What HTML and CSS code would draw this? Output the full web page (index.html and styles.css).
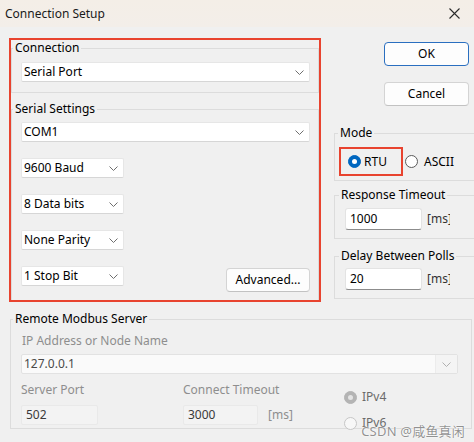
FILE: index.html
```html
<!DOCTYPE html>
<html lang="en">
<head>
<meta charset="utf-8">
<title>Connection Setup</title>
<link rel="stylesheet" href="styles.css">
</head>
<body>
<div class="window">
  <div class="titlebar">
    <span class="title">Connection Setup</span>
    <svg class="close" width="11" height="11" viewBox="0 0 11 11"><path d="M0.5 0.5 L10.5 10.5 M10.5 0.5 L0.5 10.5" stroke="#2b2b2b" stroke-width="1.1" fill="none"/></svg>
  </div>

  <div class="main">
    <div class="hl left">
      <fieldset class="grp g-conn">
        <legend>Connection</legend>
        <div class="combo wide"><span>Serial Port</span><svg class="chev" width="9" height="5" viewBox="0 0 9 5"><polyline points="0.5,0.5 4.5,4.5 8.5,0.5"/></svg></div>
      </fieldset>
      <fieldset class="grp g-serial">
        <legend>Serial Settings</legend>
        <div class="stack">
          <div class="combo wide"><span>COM1</span><svg class="chev" width="9" height="5" viewBox="0 0 9 5"><polyline points="0.5,0.5 4.5,4.5 8.5,0.5"/></svg></div>
          <div class="combo small"><span>9600 Baud</span><svg class="chev" width="9" height="5" viewBox="0 0 9 5"><polyline points="0.5,0.5 4.5,4.5 8.5,0.5"/></svg></div>
          <div class="combo small"><span>8 Data bits</span><svg class="chev" width="9" height="5" viewBox="0 0 9 5"><polyline points="0.5,0.5 4.5,4.5 8.5,0.5"/></svg></div>
          <div class="combo small"><span>None Parity</span><svg class="chev" width="9" height="5" viewBox="0 0 9 5"><polyline points="0.5,0.5 4.5,4.5 8.5,0.5"/></svg></div>
          <div class="last-row">
            <div class="combo small"><span>1 Stop Bit</span><svg class="chev" width="9" height="5" viewBox="0 0 9 5"><polyline points="0.5,0.5 4.5,4.5 8.5,0.5"/></svg></div>
            <div class="btn adv">Advanced...</div>
          </div>
        </div>
      </fieldset>
    </div>

    <div class="right">
      <div class="btn ok">OK</div>
      <div class="btn cancel">Cancel</div>
      <fieldset class="grp g-mode">
        <legend>Mode</legend>
        <div class="mode-row">
          <div class="hl rtu"><span class="radio on"></span><span>RTU</span></div>
          <div class="opt"><span class="radio"></span><span>ASCII</span></div>
        </div>
      </fieldset>
      <fieldset class="grp g-time">
        <legend>Response Timeout</legend>
        <div class="field-row"><div class="tb">1000</div><span class="unit">[ms]</span></div>
      </fieldset>
      <fieldset class="grp g-time g-delay">
        <legend>Delay Between Polls</legend>
        <div class="field-row"><div class="tb">20</div><span class="unit">[ms]</span></div>
      </fieldset>
    </div>
  </div>

  <fieldset class="grp g-remote">
    <legend>Remote Modbus Server</legend>
    <div class="dis-label ip-label">IP Address or Node Name</div>
    <div class="combo dis-combo"><span>127.0.0.1</span><span class="dd"><svg class="chev" width="9" height="5" viewBox="0 0 9 5"><polyline points="0.5,0.5 4.5,4.5 8.5,0.5"/></svg></span></div>
    <div class="net-grid">
      <div class="col">
        <div class="dis-label">Server Port</div>
        <div class="dis-tb port">502</div>
      </div>
      <div class="col">
        <div class="dis-label">Connect Timeout</div>
        <div class="tb-row"><div class="dis-tb ct">3000</div><span class="dis-unit">[ms]</span></div>
      </div>
      <div class="col radios">
        <div class="opt dis"><span class="radio dis-on"></span><span>IPv4</span></div>
        <div class="opt dis"><span class="radio dis-off"></span><span>IPv6</span></div>
      </div>
    </div>
  </fieldset>
</div>
<div class="watermark">CSDN @咸鱼真闲</div>
</body>
</html>
```

FILE: styles.css
```css
* { box-sizing: border-box; }

html, body {
  margin: 0;
  padding: 0;
}

body {
  width: 474px;
  height: 442px;
  overflow: hidden;
  background: #f0f0f0;
  font-family: "Noto Sans", "Noto Sans CJK SC", sans-serif;
  font-size: 12px;
  line-height: 16px;
  color: #000;
  position: relative;
}

.window {
  width: 474px;
  height: 442px;
}

.titlebar {
  height: 27px;
  display: flex;
  align-items: center;
  justify-content: space-between;
  padding: 0 14px 0 5px;
  background: linear-gradient(#f4eee7, #f3eee9);
}

.title {
  font-size: 12px;
  color: #1a1a1a;
}

.main {
  display: flex;
  gap: 13px;
  padding: 11px 0 0 9px;
}

.hl {
  border: 2px solid #e8432f;
}

.left {
  width: 312px;
  height: 264px;
  flex: none;
  display: flex;
  flex-direction: column;
}

/* group boxes */
.grp {
  margin: 0;
  min-width: 0;
  border: 1px solid #dcdcdc;
}

.grp legend {
  padding: 0 2px;
  line-height: 16px;
}

.g-conn {
  padding: 6px 8px 10px 9px;
}
.g-conn legend { margin-left: -8px; }

.g-serial {
  margin-top: 8px;
  padding: 5px 8px 0 9px;
  border-bottom: 0;
  flex: 1;
}
.g-serial legend { margin-left: -8px; }

.stack {
  display: flex;
  flex-direction: column;
  gap: 16px;
}

.last-row {
  display: flex;
  justify-content: space-between;
  align-items: flex-start;
}

/* combo boxes */
.combo {
  height: 20px;
  background: #fff;
  border: 1px solid #e6e6e6;
  border-bottom-color: #d6d6d6;
  border-radius: 2px;
  display: flex;
  align-items: center;
  justify-content: space-between;
  padding: 0 5px 0 2px;
  line-height: 16px;
}

.combo.small { width: 103px; }

.chev {
  flex: none;
}
.chev polyline {
  fill: none;
  stroke: #6e6e6e;
  stroke-width: 1;
}

/* buttons */
.btn {
  background: #fdfdfd;
  border: 1px solid #d4d4d4;
  border-bottom-color: #c2c2c2;
  border-radius: 4px;
  display: flex;
  align-items: center;
  justify-content: center;
  font-size: 12px;
}

.adv {
  width: 84px;
  height: 24px;
  margin-top: 2px;
}

.right {
  width: 150px;
  flex: none;
  display: flex;
  flex-direction: column;
  align-items: stretch;
}

.ok, .cancel {
  width: 85px;
  height: 24px;
  margin-left: 50px;
}

.ok {
  margin-top: 4px;
  border-color: #2a6fc0;
}

.cancel {
  margin-top: 16px;
}

.g-mode {
  margin-top: 19px;
  padding: 6px 0 4px 4px;
}
.g-mode legend { margin-left: -1px; }

.mode-row {
  display: flex;
  align-items: center;
}

.rtu {
  width: 64px;
  height: 29px;
  display: flex;
  align-items: center;
  gap: 3px;
  padding-left: 7px;
}

.opt {
  display: flex;
  align-items: center;
  gap: 6px;
  margin-left: 2px;
}

.radio {
  width: 13px;
  height: 13px;
  border-radius: 50%;
  flex: none;
  position: relative;
  background: #fff;
  border: 1px solid #5b5b5b;
}

.radio.on {
  background: #0067c0;
  border-color: #0067c0;
}
.radio.on::after {
  content: "";
  position: absolute;
  left: 3px;
  top: 3px;
  width: 5px;
  height: 5px;
  border-radius: 50%;
  background: #fff;
}

.g-time {
  margin-top: 6px;
  padding: 5px 0 8px 10px;
}
.g-time legend { margin-left: -6px; }

.g-delay {
  margin-top: 9px;
  padding-top: 4px;
}

.field-row {
  display: flex;
  align-items: center;
}

.tb {
  width: 77px;
  height: 22px;
  background: #fff;
  border: 1px solid #e3e3e3;
  border-bottom-color: #8c8c8c;
  border-radius: 3px;
  padding-left: 4px;
  display: flex;
  align-items: center;
}

.unit {
  width: 23px;
  overflow: hidden;
  white-space: nowrap;
  margin-left: 5px;
  color: #333;
}

/* remote server group */
.g-remote {
  margin: 9px 2px 0 10px;
  padding: 0 13px 3px 10px;
}
.g-remote legend { margin-left: -8px; }

.dis-label {
  color: #8e8e8e;
  line-height: 16px;
}

.ip-label {
  margin-top: 6px;
  padding-left: 1px;
}

.dis-combo {
  margin-top: 5px;
  background: #fafafa;
  border-color: #e2e2e2;
  padding-right: 0;
  color: #4a4a4a;
}

.dd {
  width: 22px;
  height: 18px;
  display: flex;
  align-items: center;
  justify-content: center;
  background: #f4f4f4;
  border-left: 1px solid #ececec;
}
.dd .chev polyline { stroke: #b0b0b0; }

.net-grid {
  margin-top: 8px;
  display: grid;
  grid-template-columns: 162px 161px auto;
  align-items: start;
}

.dis-tb {
  margin-top: 7px;
  height: 20px;
  background: #f3f3f3;
  border: 1px solid #e9e9e9;
  border-radius: 2px;
  padding-left: 4px;
  display: flex;
  align-items: center;
  color: #3a3a3a;
}

.port { width: 77px; }

.tb-row {
  display: flex;
  align-items: flex-end;
}

.ct { width: 75px; }

.dis-unit {
  color: #8e8e8e;
  margin-left: 10px;
  line-height: 16px;
  padding-bottom: 2px;
}

.radios {
  display: flex;
  flex-direction: column;
  gap: 10px;
  margin-top: 7px;
  margin-bottom: -12px;
}

.opt.dis {
  margin-left: 0;
  color: #6a6a6a;
  gap: 5px;
}

.radio.dis-on {
  background: #b4b4b4;
  border-color: #b4b4b4;
}
.radio.dis-on::after {
  content: "";
  position: absolute;
  left: 3px;
  top: 3px;
  width: 5px;
  height: 5px;
  border-radius: 50%;
  background: #e4e4e4;
}

.radio.dis-off {
  background: #f7f7f7;
  border-color: #c6c6c6;
}

.watermark {
  position: absolute;
  right: 9px;
  bottom: 3px;
  font-size: 13px;
  line-height: 16px;
  color: rgba(110, 110, 110, 0.75);
  text-shadow: 0 0 2px #fff, 0 0 1px #fff;
  letter-spacing: 0.2px;
}
```
